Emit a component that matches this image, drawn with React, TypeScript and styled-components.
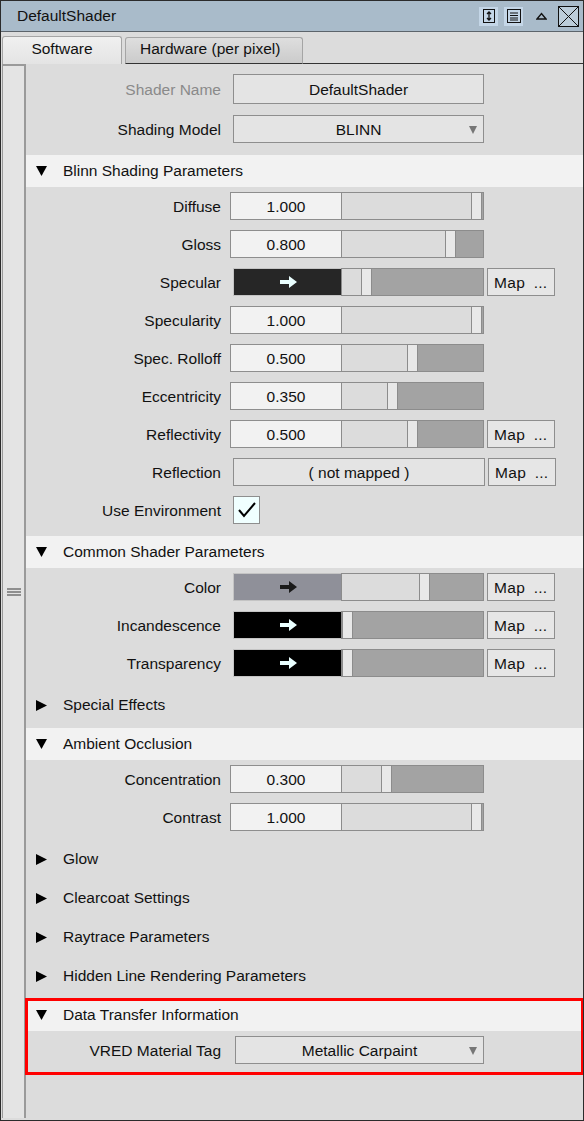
import React from "react";
import styled, { createGlobalStyle } from "styled-components";

const GlobalStyle = createGlobalStyle`
  html, body {
    margin: 0;
    padding: 0;
    background: #dcdcdc;
  }
  body {
    font-family: "Liberation Sans", Arial, sans-serif;
    font-size: 15.5px;
    color: #111;
  }
`;

type Param =
  | { kind: "value"; label: string; value: string; pos: number; map?: boolean }
  | { kind: "swatch"; label: string; bg: string; arrow: string; pos: number }
  | { kind: "mapped"; label: string }
  | { kind: "check"; label: string }
  | { kind: "select"; label: string; value: string };

type Section = { title: string; open: boolean; highlight?: boolean; rows?: Param[] };

const sections: Section[] = [
  {
    title: "Blinn Shading Parameters",
    open: true,
    rows: [
      { kind: "value", label: "Diffuse", value: "1.000", pos: 1 },
      { kind: "value", label: "Gloss", value: "0.800", pos: 0.8 },
      { kind: "swatch", label: "Specular", bg: "#262626", arrow: "#eaffff", pos: 0.15 },
      { kind: "value", label: "Specularity", value: "1.000", pos: 1 },
      { kind: "value", label: "Spec. Rolloff", value: "0.500", pos: 0.5 },
      { kind: "value", label: "Eccentricity", value: "0.350", pos: 0.35 },
      { kind: "value", label: "Reflectivity", value: "0.500", pos: 0.5, map: true },
      { kind: "mapped", label: "Reflection" },
      { kind: "check", label: "Use Environment" },
    ],
  },
  {
    title: "Common Shader Parameters",
    open: true,
    rows: [
      { kind: "swatch", label: "Color", bg: "#8f9099", arrow: "#1a1a1a", pos: 0.6 },
      { kind: "swatch", label: "Incandescence", bg: "#000", arrow: "#eaffff", pos: 0 },
      { kind: "swatch", label: "Transparency", bg: "#000", arrow: "#eaffff", pos: 0 },
    ],
  },
  { title: "Special Effects", open: false },
  {
    title: "Ambient Occlusion",
    open: true,
    rows: [
      { kind: "value", label: "Concentration", value: "0.300", pos: 0.3 },
      { kind: "value", label: "Contrast", value: "1.000", pos: 1 },
    ],
  },
  { title: "Glow", open: false },
  { title: "Clearcoat Settings", open: false },
  { title: "Raytrace Parameters", open: false },
  { title: "Hidden Line Rendering Parameters", open: false },
  {
    title: "Data Transfer Information",
    open: true,
    highlight: true,
    rows: [{ kind: "select", label: "VRED Material Tag", value: "Metallic Carpaint" }],
  },
];

const App = () => {
  return (
    <>
      <GlobalStyle />
      <Window>
        <TitleBar>
          <TitleText>DefaultShader</TitleText>
          <TitleIcons>
            <IconBox>
              <svg width="12" height="14" viewBox="0 0 12 14">
                <rect x="0.5" y="0.5" width="11" height="13" fill="none" stroke="#111" />
                <path d="M6 3v8M4 5l2-2 2 2M4 9l2 2 2-2" fill="none" stroke="#111" strokeWidth="1.3" />
              </svg>
            </IconBox>
            <IconBox>
              <svg width="14" height="14" viewBox="0 0 14 14">
                <rect x="0.5" y="0.5" width="13" height="13" fill="none" stroke="#111" />
                <path d="M3 4h8M3 6.5h8M3 9h8M3 11h8" stroke="#111" strokeWidth="1" />
              </svg>
            </IconBox>
            <Caret>
              <svg width="11" height="8" viewBox="0 0 11 8">
                <path d="M1 7L5.5 1.5 10 7z" fill="none" stroke="#111" strokeWidth="1.4" />
              </svg>
            </Caret>
            <CloseBox>
              <svg width="21" height="21" viewBox="0 0 21 21">
                <rect x="0.5" y="0.5" width="20" height="20" fill="none" stroke="#111" />
                <path d="M1 1L20 20M20 1L1 20" stroke="#111" strokeWidth="1" />
              </svg>
            </CloseBox>
          </TitleIcons>
        </TitleBar>

        <TabStrip>
          <Tab $active>Software</Tab>
          <Tab>Hardware (per pixel)</Tab>
          <TabFill />
        </TabStrip>

        <Body>
          <SideStrip>
            <Grip>
              <span />
              <span />
              <span />
            </Grip>
          </SideStrip>

          <Content>
            <TopBlock>
              <Row $h={40}>
                <Label $dim>Shader Name</Label>
                <TextBox $h={30}>DefaultShader</TextBox>
              </Row>
              <Row $h={40}>
                <Label>Shading Model</Label>
                <TextBox>
                  BLINN
                  <DropArrow />
                </TextBox>
              </Row>
            </TopBlock>

            {sections.map((s) => (
              <SectionBlock key={s.title} $highlight={s.highlight}>
                <Header $open={s.open}>
                  <Twisty>
                    {s.open ? (
                      <svg width="11" height="10" viewBox="0 0 11 10">
                        <path d="M0 0h11L5.5 10z" fill="#000" />
                      </svg>
                    ) : (
                      <svg width="11" height="11" viewBox="0 0 11 11">
                        <path d="M0 0L11 5.5 0 11z" fill="#000" />
                      </svg>
                    )}
                  </Twisty>
                  {s.title}
                </Header>
                {s.rows?.map((r) => (
                  <Row key={r.label}>
                    <Label>{r.label}</Label>
                    <ParamControl p={r} />
                  </Row>
                ))}
              </SectionBlock>
            ))}
          </Content>
        </Body>
      </Window>
    </>
  );
};

const ParamControl = ({ p }: { p: Param }) => {
  if (p.kind === "value") {
    return (
      <>
        <ValueBox>{p.value}</ValueBox>
        <Slider pos={p.pos} />
        {p.map && <MapButton>Map ...</MapButton>}
      </>
    );
  }
  if (p.kind === "swatch") {
    return (
      <>
        <Swatch $bg={p.bg}>
          <svg width="17" height="12" viewBox="0 0 17 12">
            <path d="M0 4h9V0l8 6-8 6V8H0z" fill={p.arrow} />
          </svg>
        </Swatch>
        <Slider pos={p.pos} />
        <MapButton>Map ...</MapButton>
      </>
    );
  }
  if (p.kind === "mapped") {
    return (
      <>
        <TextBox $w={252}>( not mapped )</TextBox>
        <MapButton>Map ...</MapButton>
      </>
    );
  }
  if (p.kind === "check") {
    return (
      <CheckBox>
        <svg width="20" height="18" viewBox="0 0 20 18">
          <path d="M2 9l5 6L18 2" fill="none" stroke="#000" strokeWidth="2" />
        </svg>
      </CheckBox>
    );
  }
  return (
    <TextBox $w={249} $shift={5}>
      {p.value}
      <DropArrow />
    </TextBox>
  );
};

const Slider = ({ pos }: { pos: number }) => (
  <Track>
    <TrackLeft style={{ width: Math.round(pos * 129) }} />
    <Knob />
    <TrackRight />
  </Track>
);

const Window = styled.div`
  width: 584px;
  height: 1121px;
  box-sizing: border-box;
  border: 1px solid #2b2b2b;
  display: flex;
  flex-direction: column;
  background: #dcdcdc;
  overflow: hidden;
`;

const TitleBar = styled.div`
  height: 30px;
  flex: none;
  display: flex;
  align-items: center;
  background: #a9bbca;
  border-bottom: 1px solid #5c646b;
`;

const TitleText = styled.div`
  padding-left: 16px;
  font-size: 15.5px;
  color: #111;
`;

const TitleIcons = styled.div`
  margin-left: auto;
  display: flex;
  align-items: center;
  padding-right: 4px;
`;

const IconBox = styled.div`
  width: 19px;
  height: 19px;
  margin-right: 6px;
  background: #c4d6e7;
  display: flex;
  align-items: center;
  justify-content: center;
`;

const Caret = styled.div`
  width: 11px;
  height: 19px;
  margin: 0 11px 0 7px;
  display: flex;
  align-items: center;
`;

const CloseBox = styled.div`
  width: 21px;
  height: 21px;
  background: #bccdda;
  display: flex;
`;

const TabStrip = styled.div`
  height: 32px;
  flex: none;
  display: flex;
  align-items: flex-end;
  padding-left: 1px;
`;

const Tab = styled.div<{ $active?: boolean }>`
  box-sizing: border-box;
  height: ${(p) => (p.$active ? 28 : 27)}px;
  width: ${(p) => (p.$active ? 120 : 178)}px;
  margin-left: ${(p) => (p.$active ? 0 : 3)}px;
  border: 1px solid #a5a5a5;
  border-bottom: ${(p) => (p.$active ? "none" : "1px solid #333")};
  border-radius: 3px 3px 0 0;
  background: ${(p) =>
    p.$active
      ? "linear-gradient(#f0f0f0, #e4e4e4)"
      : "linear-gradient(#dedede, #cbcbcb)"};
  display: flex;
  align-items: center;
  justify-content: ${(p) => (p.$active ? "center" : "flex-start")};
  padding-left: ${(p) => (p.$active ? 0 : 14)}px;
  padding-bottom: ${(p) => (p.$active ? 4 : 4)}px;
  font-size: 15.5px;
`;

const TabFill = styled.div`
  flex: 1;
  border-bottom: 1px solid #333;
`;

const Body = styled.div`
  flex: 1;
  display: flex;
  padding: 0 0 2px 1px;
  min-height: 0;
`;

const SideStrip = styled.div`
  width: 21px;
  flex: none;
  background: #e4e4e4;
  border-left: 1px solid #9a9a9a;
  border-top: 2px solid #9a9a9a;
  border-right: 2px solid #9a9a9a;
  display: flex;
  align-items: center;
  justify-content: center;
`;

const Grip = styled.div`
  display: flex;
  flex-direction: column;
  gap: 1px;
  span {
    display: block;
    width: 14px;
    height: 2px;
    background: #8f8f8f;
  }
`;

const Content = styled.div`
  flex: 1;
  display: flex;
  flex-direction: column;
  padding-top: 5px;
  min-width: 0;
`;

const TopBlock = styled.div`
  padding-bottom: 6px;
`;

const SectionBlock = styled.div<{ $highlight?: boolean }>`
  padding-bottom: ${(p) => (p.$highlight ? 5 : 7)}px;
  ${(p) =>
    p.$highlight &&
    `
    outline: 3px solid #ff0000;
    outline-offset: -2px;
  `}
`;

const Header = styled.div<{ $open: boolean }>`
  height: 32px;
  display: flex;
  align-items: center;
  padding-left: 10px;
  background: ${(p) => (p.$open ? "#f2f2f2" : "transparent")};
  font-size: 15.5px;
`;

const Twisty = styled.span`
  width: 11px;
  margin-right: 16px;
  display: flex;
  align-items: center;
`;

const Row = styled.div<{ $h?: number }>`
  height: ${(p) => p.$h ?? 38}px;
  display: flex;
  align-items: center;
`;

const Label = styled.div<{ $dim?: boolean }>`
  width: 195px;
  flex: none;
  text-align: right;
  padding-right: 9px;
  padding-top: 2px;
  box-sizing: content-box;
  color: ${(p) => (p.$dim ? "#8a8a8a" : "#111")};
  white-space: nowrap;
`;

const TextBox = styled.div<{ $w?: number; $h?: number; $shift?: number }>`
  position: relative;
  box-sizing: border-box;
  width: ${(p) => p.$w ?? 251}px;
  height: ${(p) => p.$h ?? 28}px;
  margin-left: ${(p) => p.$shift ?? 3}px;
  border: 1px solid #8e8e8e;
  background: #e4e4e4;
  display: flex;
  align-items: center;
  justify-content: center;
  padding-top: 1px;
`;

const DropArrow = styled.span`
  position: absolute;
  right: 6px;
  top: 10px;
  width: 0;
  height: 0;
  border-left: 4.5px solid transparent;
  border-right: 4.5px solid transparent;
  border-top: 8px solid #767676;
`;

const ValueBox = styled.div`
  box-sizing: border-box;
  width: 112px;
  height: 28px;
  border: 1px solid #8e8e8e;
  background: #f2f2f2;
  display: flex;
  align-items: center;
  justify-content: center;
  padding-top: 2px;
`;

const Swatch = styled.div<{ $bg: string }>`
  box-sizing: border-box;
  width: 109px;
  height: 28px;
  margin-left: 3px;
  border: 1px solid #c4c4c4;
  border-right: none;
  background: ${(p) => p.$bg};
  display: flex;
  align-items: center;
  justify-content: center;
`;

const Track = styled.div`
  box-sizing: border-box;
  width: 143px;
  height: 28px;
  margin-left: -1px;
  border: 1px solid #8c8c8c;
  display: flex;
`;

const TrackLeft = styled.div`
  flex: none;
  background: #dcdcdc;
`;

const Knob = styled.div`
  flex: none;
  box-sizing: border-box;
  width: 11px;
  background: #e8e8e8;
  border-left: 1px solid #8c8c8c;
  border-right: 1px solid #8c8c8c;
`;

const TrackRight = styled.div`
  flex: 1;
  background: #a3a3a3;
`;

const MapButton = styled.div`
  box-sizing: border-box;
  width: 68px;
  height: 28px;
  margin-left: 3px;
  border: 1px solid #8e8e8e;
  background: #e6e6e6;
  display: flex;
  align-items: center;
  padding-left: 6px;
  padding-top: 1px;
  white-space: pre;
  word-spacing: 4px;
  letter-spacing: 0.3px;
`;

const CheckBox = styled.div`
  box-sizing: border-box;
  width: 27px;
  height: 28px;
  margin-left: 3px;
  border: 1px solid #8e8e8e;
  background: #f0ffff;
  display: flex;
  align-items: center;
  justify-content: center;
`;

export default App;
